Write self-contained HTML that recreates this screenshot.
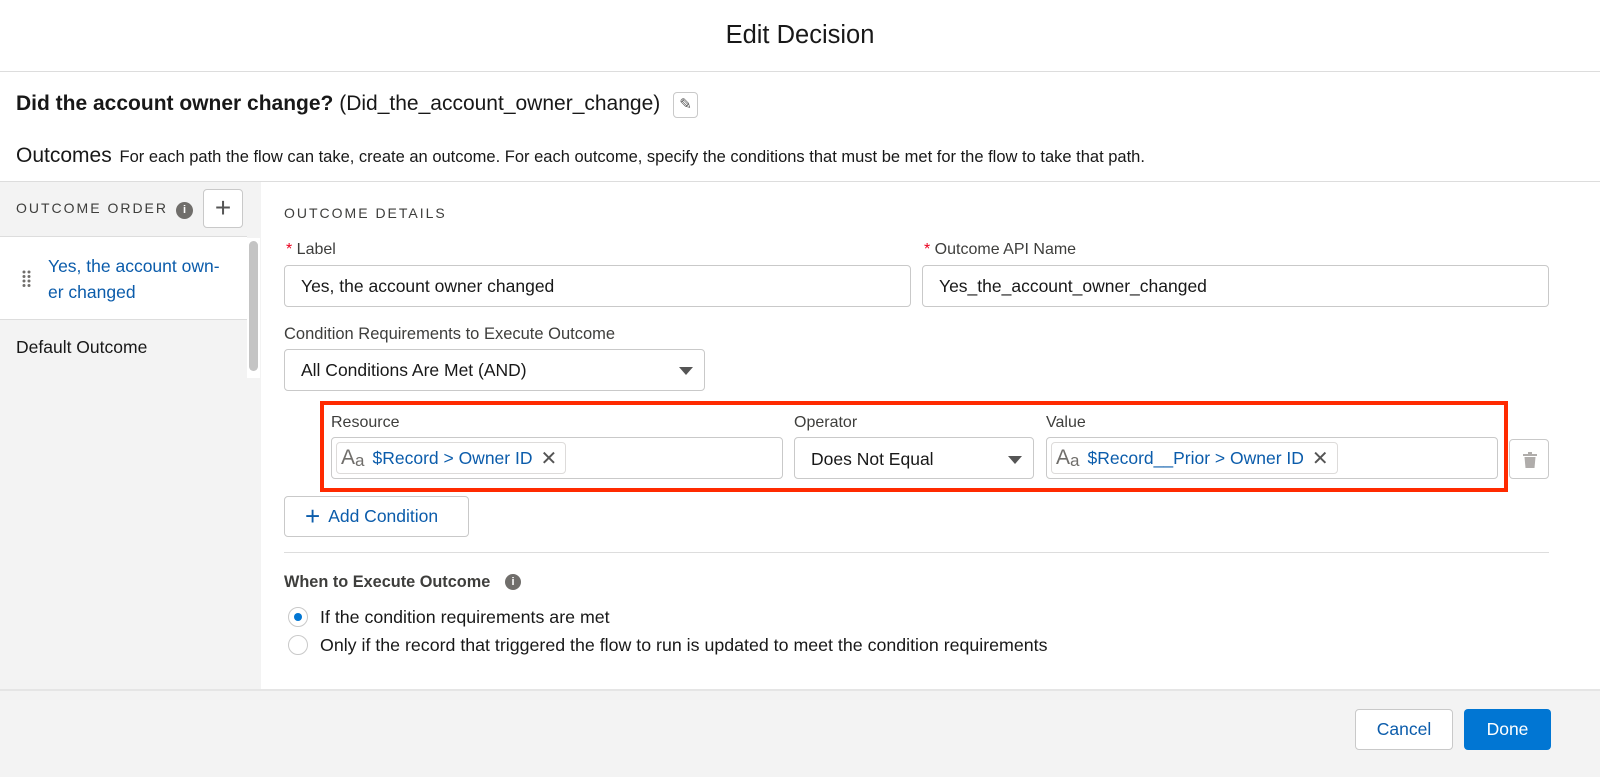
<!DOCTYPE html>
<html><head><meta charset="utf-8"><style>
*{box-sizing:border-box;margin:0;padding:0}
body{width:1600px;height:777px;font-family:"Liberation Sans",sans-serif;color:#181818;background:#fff;position:relative;overflow:hidden;font-size:17.5px}
.a{position:absolute;white-space:nowrap}
.inp{position:absolute;border:1px solid #c9c9c9;border-radius:4px;background:#fff;height:42px}
.lbl{position:absolute;font-size:16px;color:#3e3e3c;white-space:nowrap}
.req{color:#ea001e}
.pill{position:absolute;border:1px solid #dddbda;border-radius:4px;height:32px;top:4px;left:4px;display:flex;align-items:center;padding:0 8px 0 4px;color:#0b5cab;font-size:17.5px;white-space:nowrap}
.tri{position:absolute;width:0;height:0;border-left:7px solid transparent;border-right:7px solid transparent;border-top:8px solid #555}
</style></head><body>
<div class="a" style="left:0;top:0;width:1600px;height:72px;border-bottom:1px solid #ddd;text-align:center;font-size:25.5px;line-height:70px">Edit Decision</div>
<div class="a" style="left:16px;top:92px;font-size:21px"><b>Did the account owner change?</b> (Did_the_account_owner_change)</div>
<div class="a" style="left:673px;top:92px;width:25px;height:26px;border:1px solid #c9c9c9;border-radius:4px;text-align:center;font-size:15px;line-height:24px;color:#555">✎</div>
<div class="a" style="left:16px;top:144px;font-size:21px">Outcomes <span style="font-size:16.5px;margin-left:2px">For each path the flow can take, create an outcome. For each outcome, specify the conditions that must be met for the flow to take that path.</span></div>
<div class="a" style="left:0;top:181px;width:1600px;border-top:1px solid #ddd"></div>
<div class="a" style="left:0;top:182px;width:261px;height:507px;background:#f3f3f3"></div>
<div class="a" style="left:16px;top:200px;font-size:14px;letter-spacing:2px;color:#3e3e3c">OUTCOME ORDER</div>
<div class="a" style="left:176px;top:202px;width:17px;height:17px;border-radius:50%;background:#706e6b;color:#fff;font-size:11px;text-align:center;line-height:17px;font-weight:bold">i</div>
<div class="a" style="left:203px;top:189px;width:40px;height:39px;border:1px solid #c9c9c9;border-radius:4px;background:#fff;text-align:center;font-size:28px;line-height:36px;color:#555">+</div>
<div class="a" style="left:0;top:236px;width:247px;height:84px;background:#fff;border-top:1px solid #ddd;border-bottom:1px solid #ddd"></div>
<svg class="a" style="left:22px;top:270px" width="10" height="18" viewBox="0 0 10 18" fill="#706e6b"><circle cx="2" cy="2" r="1.5"/><circle cx="7" cy="2" r="1.5"/><circle cx="2" cy="6.5" r="1.5"/><circle cx="7" cy="6.5" r="1.5"/><circle cx="2" cy="11" r="1.5"/><circle cx="7" cy="11" r="1.5"/><circle cx="2" cy="15.5" r="1.5"/><circle cx="7" cy="15.5" r="1.5"/></svg>
<div class="a" style="left:48px;top:253px;color:#0b5cab;font-size:17.5px;line-height:26px">Yes, the account own-<br>er changed</div>
<div class="a" style="left:16px;top:337px;font-size:17.5px">Default Outcome</div>
<div class="a" style="left:247px;top:238px;width:13px;height:140px;background:#fff"></div>
<div class="a" style="left:249px;top:241px;width:9px;height:130px;background:#c4c4c4;border-radius:5px"></div>
<div class="a" style="left:284px;top:205px;font-size:14px;letter-spacing:2px;color:#3e3e3c">OUTCOME DETAILS</div>
<div class="lbl" style="left:286px;top:241px"><span class="req">*</span> Label</div>
<div class="inp" style="left:284px;top:265px;width:627px"><span class="a" style="left:16px;top:10px">Yes, the account owner changed</span></div>
<div class="lbl" style="left:924px;top:241px"><span class="req">*</span> Outcome API Name</div>
<div class="inp" style="left:922px;top:265px;width:627px"><span class="a" style="left:16px;top:10px">Yes_the_account_owner_changed</span></div>
<div class="lbl" style="left:284px;top:325px;font-size:16.5px">Condition Requirements to Execute Outcome</div>
<div class="inp" style="left:284px;top:349px;width:421px"><span class="a" style="left:16px;top:10px">All Conditions Are Met (AND)</span><span class="tri" style="left:394px;top:17px"></span></div>
<div class="a" style="left:320px;top:401px;width:1188px;height:91px;border:4px solid #ff2a00"></div>
<div class="lbl" style="left:331px;top:414px">Resource</div>
<div class="inp" style="left:331px;top:437px;width:452px;height:42px"><div class="pill"><span style="color:#706e6b;font-size:21px">A</span><span style="color:#706e6b;font-size:17px;margin:6px 8px 0 0">a</span>$Record &gt; Owner ID<span style="color:#555;margin-left:8px;font-size:20px">✕</span></div></div>
<div class="lbl" style="left:794px;top:414px">Operator</div>
<div class="inp" style="left:794px;top:437px;width:240px"><span class="a" style="left:16px;top:11px">Does Not Equal</span><span class="tri" style="left:213px;top:18px"></span></div>
<div class="lbl" style="left:1046px;top:414px">Value</div>
<div class="inp" style="left:1046px;top:437px;width:452px"><div class="pill"><span style="color:#706e6b;font-size:21px">A</span><span style="color:#706e6b;font-size:17px;margin:6px 8px 0 0">a</span>$Record__Prior &gt; Owner ID<span style="color:#555;margin-left:8px;font-size:20px">✕</span></div></div>
<div class="a" style="left:1509px;top:439px;width:40px;height:40px;border:1px solid #c9c9c9;border-radius:4px"><svg class="a" style="left:13px;top:12px" width="14" height="16" viewBox="0 0 14 16" fill="#b0adab"><rect x="0" y="2" width="14" height="2"/><rect x="5" y="0" width="4" height="2"/><path d="M1.5 5h11l-1 11h-9z"/></svg></div>
<div class="a" style="left:284px;top:496px;width:185px;height:41px;border:1px solid #c9c9c9;border-radius:4px;color:#0b5cab;font-size:17.5px;line-height:39px;padding-left:20px"><span style="font-size:26px;vertical-align:-3px;margin-right:8px">+</span>Add Condition</div>
<div class="a" style="left:284px;top:552px;width:1265px;border-top:1px solid #ddd"></div>
<div class="a" style="left:284px;top:573px;font-size:16.3px;font-weight:bold;color:#3e3e3c">When to Execute Outcome</div>
<div class="a" style="left:505px;top:574px;width:16px;height:16px;border-radius:50%;background:#706e6b;color:#fff;font-size:11px;text-align:center;line-height:16px;font-weight:bold">i</div>
<div class="a" style="left:288px;top:607px;width:20px;height:20px;border-radius:50%;border:1px solid #c9c9c9;background:#fff"><div class="a" style="left:5px;top:5px;width:8px;height:8px;border-radius:50%;background:#0176d3"></div></div>
<div class="a" style="left:320px;top:607px;font-size:17.8px;color:#181818">If the condition requirements are met</div>
<div class="a" style="left:288px;top:635px;width:20px;height:20px;border-radius:50%;border:1px solid #c9c9c9;background:#fff"></div>
<div class="a" style="left:320px;top:635px;font-size:17.8px;color:#181818">Only if the record that triggered the flow to run is updated to meet the condition requirements</div>
<div class="a" style="left:0;top:689px;width:1600px;height:88px;background:#f3f3f3;border-top:2px solid #e5e5e5"></div>
<div class="a" style="left:1355px;top:709px;width:98px;height:41px;border:1px solid #c9c9c9;border-radius:4px;background:#fff;color:#0b5cab;text-align:center;line-height:39px">Cancel</div>
<div class="a" style="left:1464px;top:709px;width:87px;height:41px;border-radius:4px;background:#0176d3;color:#fff;text-align:center;line-height:41px">Done</div>
</body></html>
